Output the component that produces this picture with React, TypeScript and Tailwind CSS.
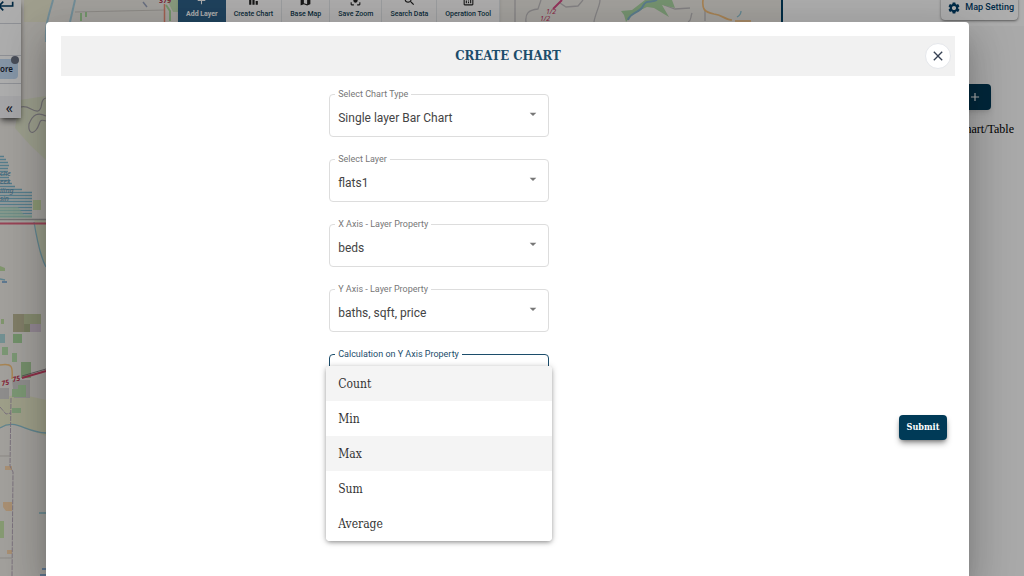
import { useState } from "react";
import {
  MdKeyboardReturn,
  MdAdd,
  MdBarChart,
  MdMap,
  MdCenterFocusStrong,
  MdSearch,
  MdOutlineAnalytics,
  MdSettings,
  MdClose,
  MdArrowDropDown,
} from "react-icons/md";

const tools = [
  { label: "Add Layer", Icon: MdAdd, active: true },
  { label: "Create Chart", Icon: MdBarChart },
  { label: "Base Map", Icon: MdMap },
  { label: "Save Zoom", Icon: MdCenterFocusStrong },
  { label: "Search Data", Icon: MdSearch },
  { label: "Operation Tool", Icon: MdOutlineAnalytics },
];

const fields = [
  { id: "chart-type", label: "Select Chart Type", value: "Single layer Bar Chart" },
  { id: "layer", label: "Select Layer", value: "flats1" },
  { id: "x-axis", label: "X Axis - Layer Property", value: "beds" },
  { id: "y-axis", label: "Y Axis - Layer Property", value: "baths, sqft, price" },
];

const calculations = ["Count", "Min", "Max", "Sum", "Average"];

function MapCanvas() {
  return (
    <svg
      className="absolute inset-0 h-full w-full"
      viewBox="0 0 781 576"
      preserveAspectRatio="xMinYMin slice"
      fill="none"
      aria-hidden="true"
    >
      <rect width="1600" height="1200" fill="#efece6" />
      {/* fields and woods */}
      <path d="M24 0 H52 L46 22 H24Z" fill="#ecead2" />
      <path d="M20 100 L46 96 V160 L30 145 L15 128Z" fill="#e6ead0" />
      <path d="M0 398 L20 394 L46 400 V436 L12 424 L0 428Z" fill="#e9eacb" />
      <path d="M34 220 L46 220 V266 L40 255Z" fill="#e3e9cd" />
      <rect x="33" y="200" width="8" height="10" fill="#cfe0ac" />
      <rect x="13" y="314" width="12" height="18" fill="#bdb899" />
      <rect x="24" y="314" width="17" height="10" fill="#c3cca2" />
      <rect x="24" y="324" width="6" height="8" fill="#aeb58d" />
      <rect x="30" y="324" width="11" height="8" fill="#d7c8d8" />
      <rect x="13" y="334" width="9" height="9" fill="#a8d69c" />
      <rect x="0" y="334" width="5" height="9" fill="#a9d5d8" />
      <path d="M0 266 l5 2 v3 h-5z M1 319 h3 v5 h-3z" fill="#bddca1" />
      <rect x="2" y="347" width="6" height="8" fill="#b5dfac" />
      <rect x="12" y="353" width="5" height="9" fill="#b5dfac" />
      <rect x="21" y="362" width="10" height="16" fill="#add19e" />
      <path d="M12 380 h18 v18 h-16z M0 388 h9 v11 h-9z" fill="#d1d0cf" />
      <path d="M12 389 h6 v-4 h8 v12 h-14z M12 408 h9 v5 h-9z" fill="#b5dfac" />
      <path d="M3 502 h9 v9 h-6 l-3 -4z M5 466 h7 v4 h-7z M7 550 h5 v4 h-5z" fill="#f8d3a8" />
      <path d="M0 521 h4 v17 h-4z" fill="#c6e3a9" />
      {/* wetlands basin */}
      <path
        stroke="#7fb9cf"
        strokeWidth="1.500"
        d="M0 156.500h4 M0 159.500h6 M0 162.500h8 M0 165.500h9 M0 168.500h8 M0 171.500h8 M0 174.500h8 M0 177.500h9 M0 180.500h10 M0 183.500h12 M0 186.500h15 M0 189.500h22 M0 192.500h32 M0 195.500h32 M0 198.500h32 M0 201.500h32 M0 204.500h32 M0 207.500h32 M0 210.500h32 M0 213.500h32 M0 216.500h32"
      />
      <path d="M0 207 h18 l6 8 h8 v3 h-32z" fill="#b9e3c2" fillOpacity=".6" />
      <g fill="#5e8fae" fontSize="7" fontStyle="italic" fontFamily="Noto Sans, sans-serif">
        <text x="0" y="176">che</text>
        <text x="0" y="184">eek</text>
        <text x="0" y="193">iling</text>
        <text x="0" y="201">sin</text>
      </g>
      {/* streams */}
      <path d="M53 0 C48 18 45 25 46 42 M75 0 L70 22" stroke="#a8d0df" strokeWidth="2" />
      <path d="M34 222 C37 240 40 256 46 267 M0 428 C16 418 24 432 46 433 M0 279 l5 1 M39 513 h7" stroke="#8fc4d4" strokeWidth="1.300" />
      <path d="M2 282 h5 M42 569 h4 M40 575 h6" stroke="#6d9fd0" strokeWidth="1.300" />
      {/* roads */}
      <path d="M21 107 C29 105 32 112 38 111 C44 109 39 99 46 98 M46 116 C38 112 33 114 29 124 C28 132 32 135 36 130 C41 124 38 118 46 121" stroke="#aaa6ad" strokeWidth="1.200" />
      <path d="M0 219.500 H46" stroke="#aaa" strokeWidth="1.500" />
      <path d="M0 223.500 H46" stroke="#e0637f" strokeWidth="2" />
      <path d="M0 365 C12 363 13 366 12 379" stroke="#f7c57c" strokeWidth="1.500" />
      <path d="M22 378 L46 371" stroke="#d1476b" strokeWidth="2" />
      <path d="M22 376 L46 369" stroke="#756b72" strokeWidth=".8" />
      <path d="M0 407 L6 414 L11 413 M11 398 L10 466 L13 472 L12 576" stroke="#b5a8b8" strokeWidth="1" strokeDasharray="5 1" />
      <path d="M0 456 h11 M0 558 h12 M75 12 L165 10" stroke="#cfcbc5" />
      <path d="M81 13 v8 M86 12 v5 M166 5 l4 6 v10" stroke="#a9dc9d" strokeWidth="2" />
      <path d="M164.500 4 V22" stroke="#ee8c78" strokeWidth="1.500" />
      <path d="M143 2 l4 5" stroke="#9ba4bd" strokeWidth="1.500" />
      <path d="M167 0 h11 v12 h-5z" fill="#c9e3b9" />
      <text x="159" y="3" fontSize="7" fontWeight="700" fill="#b5374f" fontFamily="Noto Sans, sans-serif">379</text>
      <g fill="#c3334f" fontSize="7" fontStyle="italic" fontFamily="Noto Sans, sans-serif" fontWeight="700">
        <text x="2" y="386" transform="rotate(-12 2 386)">75</text>
        <text x="13" y="382" transform="rotate(-12 13 382)">75</text>
      </g>
      {/* eastern hills */}
      <path d="M515 0 V22 M541 0 L538 9 C528 10 525 14 526 22 M600 0 C600 6 595 14 594 22 M664 5 L675 9 L690 8 M692 13 C690 18 692 20 688 22 M705 10 v11 M560 3 L566 7 L578 6 L583 0" stroke="#c2bfc1" strokeWidth="1.300" />
      <path d="M621 11 L632 10 L645 0 H672 L675 8 L662 5 L669 17 L654 8 L647 7 L634 13 L626 22 L624 15Z" fill="#add8a4" />
      <path d="M628 20 C630 12 640 13 643 6 S652 3 657 0" stroke="#86b5cd" strokeWidth="2" />
      <path d="M703 0 C702 9 704 12 714 14 C722 15 726 20 732 20 M735 21 h16" stroke="#f5c07d" strokeWidth="1.700" />
      <path d="M741 11 q0 4 -4 6" stroke="#8fc4d4" strokeWidth="1.300" />
      <path d="M562 0 L553 9" stroke="#d84c86" strokeWidth="2" />
      <g fill="#c8375f" fontSize="7" fontStyle="italic" fontFamily="Noto Sans, sans-serif">
        <text x="546" y="14">1/2</text>
        <text x="540" y="21">1/2</text>
      </g>
    </svg>
  );
}

function Workspace() {
  return (
    <div className="absolute inset-0 flex" aria-hidden="true">
      <main className="relative flex flex-1 items-start overflow-hidden">
        <MapCanvas />
        <aside className="relative flex w-[21px] flex-col overflow-hidden bg-white shadow-md shadow-black/50">
          <a href="#back" className="flex h-6 items-start border-b border-gray-300 text-[#003a60]">
            <MdKeyboardReturn className="-ml-1 -mt-1 size-5 shrink-0" />
          </a>
          <div className="h-8 border-b border-gray-300" />
          <div className="relative flex h-7 border-b border-gray-300 pb-1 pt-[3px]">
            <button className="w-[18px] rounded-r bg-[#c5dcf5] text-left font-['Noto_Sans',sans-serif] text-[8px] font-semibold text-gray-800">
              ore
            </button>
            <span className="absolute right-0.5 top-0 size-2 rounded-full bg-gray-500" />
          </div>
          <div className="h-3" />
          <button className="h-[22px] bg-gray-100 pr-2 text-right font-['Noto_Sans',sans-serif] text-[14px] leading-6 text-gray-800">
            «
          </button>
        </aside>
        <nav className="relative -mt-[6px] ml-[157px] flex bg-white/95 shadow">
          {tools.map(({ label, Icon, active }) => (
            <button
              key={label}
              className={
                active
                  ? "flex h-7 flex-col items-center bg-[#2f6289] px-2 text-[7px] font-bold leading-[14px] text-white"
                  : "flex h-7 flex-col items-center border-r border-gray-200 px-2 text-[7px] font-medium leading-[14px] text-[#123f55]"
              }
            >
              <Icon className={active ? "size-[13px] shrink-0" : "size-[13px] shrink-0 text-[#222]"} />
              <span className="whitespace-nowrap">{label}</span>
            </button>
          ))}
        </nav>
      </main>
      <aside className="w-[243px] border-l-2 border-[#004266] bg-[#f9f9f9]">
        <div className="flex h-[26px] items-start justify-end bg-white pr-[6px]">
          <button className="-mt-1 flex h-6 items-center gap-1 rounded-sm bg-white pl-[6px] pr-1 text-[9px] font-medium text-[#00406a] shadow shadow-black/40">
            <MdSettings className="size-[14px]" />
            Map Setting
          </button>
        </div>
        <div className="flex flex-col items-end gap-3 pt-[58px]">
          <button className="mr-[33px] flex h-[26px] w-8 items-center justify-center rounded bg-[#003a57] text-white shadow-md">
            <MdAdd className="size-[14px]" />
          </button>
          <p className="mr-[10px] font-['Liberation_Serif',serif] text-[12px] leading-[14px] text-black">Chart/Table</p>
        </div>
      </aside>
    </div>
  );
}

export default function App() {
  const [calculation, setCalculation] = useState("Count");

  return (
    <div className="relative min-h-screen overflow-hidden font-[Roboto,sans-serif]">
      <Workspace />
      <div className="absolute inset-0 bg-black/32" />
      <div className="relative pl-[46px] pr-[55px] pt-[22px]">
        <section
          role="dialog"
          aria-modal="true"
          aria-labelledby="dialog-title"
          className="min-h-[calc(100vh-22px)] rounded-t-sm bg-white pl-[15px] pr-[14px] pt-[14px] shadow-[0_11px_15px_-7px_rgba(0,0,0,0.2),0_24px_38px_3px_rgba(0,0,0,0.14),0_9px_46px_8px_rgba(0,0,0,0.12)]"
        >
          <header className="grid h-10 grid-cols-[1fr_auto_1fr] items-center bg-[#f1f1f1] px-1">
            <h1
              id="dialog-title"
              className="col-start-2 font-['DejaVu_Serif_Condensed','DejaVu_Serif',serif] text-[13px] font-bold text-[#1c4d6b]"
            >
              CREATE CHART
            </h1>
            <button
              aria-label="Close"
              className="flex size-[26px] items-center justify-center justify-self-end rounded-full border border-gray-200 bg-white text-gray-700"
            >
              <MdClose className="size-4" />
            </button>
          </header>

          <form
            className="grid grid-cols-[11fr_2fr] pt-[18px]"
            onSubmit={(event) => event.preventDefault()}
          >
            <div className="mx-auto flex w-[220px] flex-col gap-[22px]">
              {fields.map(({ id, label, value }) => (
                <div key={id} className="relative">
                  <label
                    htmlFor={id}
                    className="absolute left-[6px] top-0 -translate-y-1/2 bg-white px-[3px] text-[9px] leading-[10px] text-[#777]"
                  >
                    {label}
                  </label>
                  <select
                    id={id}
                    className="block h-[43px] w-full appearance-none rounded border border-[#ddd] bg-white pl-2 pr-6 pt-1 text-[12px] text-[#444]"
                  >
                    <option>{value}</option>
                  </select>
                  <MdArrowDropDown className="pointer-events-none absolute right-2 top-3 size-4 text-[#777]" />
                </div>
              ))}
              <div className="relative">
                <label
                  htmlFor="calculation"
                  className="absolute left-[6px] top-0 -translate-y-1/2 bg-white px-[3px] text-[9px] leading-[10px] text-[#1c4d6b]"
                >
                  Calculation on Y Axis Property
                </label>
                <select
                  id="calculation"
                  value={calculation}
                  onChange={(event) => setCalculation(event.target.value)}
                  className="block h-[43px] w-full appearance-none rounded border border-[#1c4d6b] bg-white pl-2 text-[12px] text-[#333]"
                >
                  {calculations.map((name) => (
                    <option key={name}>{name}</option>
                  ))}
                </select>
                <div
                  role="listbox"
                  aria-label="Calculation on Y Axis Property"
                  className="absolute -left-[3px] -right-[3px] top-3 flex flex-col overflow-hidden rounded-sm bg-white shadow-[0_2px_4px_-1px_rgba(0,0,0,0.3),0_1px_6px_rgba(0,0,0,0.25)]"
                >
                  {calculations.map((name) => (
                    <button
                      key={name}
                      type="button"
                      role="option"
                      aria-selected={name === calculation}
                      onClick={() => setCalculation(name)}
                      className={
                        name === calculation || name === "Max"
                          ? "h-[35px] bg-[#f4f4f4] px-3 text-left font-['DejaVu_Serif_Condensed','DejaVu_Serif',serif] text-[12px] text-[#333]"
                          : "h-[35px] bg-white px-3 text-left font-['DejaVu_Serif_Condensed','DejaVu_Serif',serif] text-[12px] text-[#333]"
                      }
                    >
                      {name}
                    </button>
                  ))}
                </div>
              </div>
            </div>
            <div className="flex items-start justify-end pr-2 pt-[321px]">
              <button
                type="submit"
                className="h-[25px] w-12 rounded bg-[#003a57] font-['DejaVu_Serif_Condensed','DejaVu_Serif',serif] text-[9px] font-bold text-white shadow-md shadow-black/40"
              >
                Submit
              </button>
            </div>
          </form>
        </section>
      </div>
    </div>
  );
}
